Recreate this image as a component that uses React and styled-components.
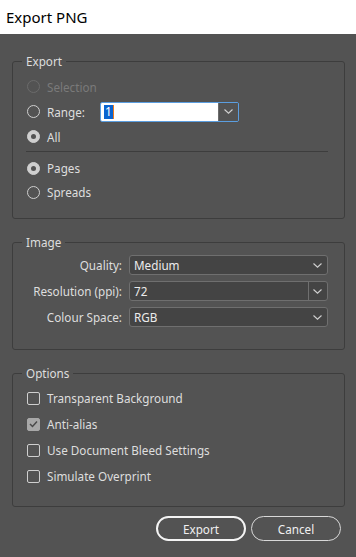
import styled, { createGlobalStyle } from 'styled-components';

const GlobalStyle = createGlobalStyle`
  html, body {
    margin: 0;
    padding: 0;
    background: #535353;
  }
  body {
    font-family: "Noto Sans", "Open Sans", sans-serif;
  }
`;

const Window = styled.div`
  width: 356px;
  height: 557px;
  display: flex;
  flex-direction: column;
  background: #535353;
  overflow: hidden;
`;

const TitleBar = styled.div`
  height: 34px;
  background: #ffffff;
  color: #000;
  font-size: 15px;
  display: flex;
  align-items: center;
  padding-left: 6px;
  padding-bottom: 1px;
  box-sizing: border-box;
`;

const Body = styled.div`
  display: flex;
  flex-direction: column;
  padding: 19px 11px 0 12px;
  gap: 15px;
`;

const Panel = styled.fieldset`
  margin: 0;
  border: 1px solid #3d3d3d;
  border-radius: 3px;
  padding: ${(p) => p.$pad || '5px 16px 14px 14px'};
  min-width: 0;
  display: flex;
  flex-direction: column;
`;

const Legend = styled.legend`
  color: #dedede;
  font-size: 11.7px;
  line-height: 16px;
  padding: 0 4px;
  margin-left: -5px;
`;

const Row = styled.label`
  display: flex;
  align-items: center;
  height: ${(p) => p.$h || 25}px;
  gap: 7px;
  font-size: 11.7px;
  color: ${(p) => (p.$disabled ? '#7a7a7a' : '#dedede')};
`;

const Radio = styled.span`
  width: 11px;
  height: 11px;
  border-radius: 50%;
  border: 1px solid ${(p) => (p.$disabled ? '#6b6b6b' : '#cfcfcf')};
  display: flex;
  align-items: center;
  justify-content: center;
  flex: none;
  background: ${(p) => (p.$checked ? '#cfcfcf' : 'transparent')};

  &::after {
    content: '';
    width: 5px;
    height: 5px;
    border-radius: 50%;
    background: ${(p) => (p.$checked ? '#535353' : 'transparent')};
  }
`;

const RowLabel = styled.span`
  width: ${(p) => p.$w || 'auto'};
`;

const Separator = styled.div`
  height: 1px;
  background: #3d3d3d;
  margin: 2px 0 4px -1px;
`;

const Combo = styled.div`
  display: flex;
  width: 139px;
  height: 20px;
  box-sizing: border-box;
  border: 1px solid #5b9ee0;
  border-radius: 2px;
  margin-left: 8px;
  overflow: hidden;
`;

const ComboField = styled.div`
  flex: 1;
  background: #ffffff;
  display: flex;
  align-items: center;
  padding-left: 3px;
`;

const Selected = styled.span`
  background: #0a64d0;
  color: #fff;
  font-size: 12px;
  line-height: 14px;
  padding: 0 1px;
  border-right: 1px solid #f07a1a;
`;

const ComboButton = styled.div`
  width: 19px;
  display: flex;
  align-items: center;
  justify-content: center;
  background: #535353;
  border-left: 1px solid #6c6c6c;
`;

const FormGrid = styled.div`
  display: grid;
  grid-template-columns: 94px 199px;
  column-gap: 7px;
  row-gap: 6px;
  align-items: center;
  margin-left: 1px;
`;

const FieldLabel = styled.span`
  text-align: right;
  font-size: 11.7px;
  color: #dedede;
  white-space: nowrap;
`;

const Select = styled.div`
  height: 20px;
  box-sizing: border-box;
  border: 1px solid #6f6f6f;
  border-radius: 3px;
  background: #444444;
  display: flex;
  align-items: center;
  font-size: 11.7px;
  color: #ececec;
`;

const SelectValue = styled.span`
  flex: 1;
  padding-left: 4px;
`;

const SelectArrow = styled.span`
  width: 17px;
  height: 100%;
  display: flex;
  align-items: center;
  justify-content: center;
  border-left: ${(p) => (p.$split ? '1px solid #6f6f6f' : 'none')};
  margin-right: 1px;
`;

const Check = styled.span`
  width: 11px;
  height: 11px;
  border-radius: 2px;
  border: 1px solid ${(p) => (p.$checked ? '#a8a8a8' : '#cfcfcf')};
  background: ${(p) => (p.$checked ? '#a8a8a8' : 'transparent')};
  display: flex;
  align-items: center;
  justify-content: center;
  flex: none;
`;

const Buttons = styled.div`
  display: flex;
  justify-content: flex-end;
  gap: 5px;
  padding: 9px 15px 0 0;
`;

const Button = styled.button`
  width: 90px;
  height: 25px;
  border-radius: 13px;
  border: ${(p) => (p.$primary ? '2px solid #f4f4f4' : '1px solid #d8d8d8')};
  background: transparent;
  color: #f0f0f0;
  font-family: inherit;
  font-size: 11.7px;
  padding: 0;
`;

const Chevron = ({ color = '#d0d0d0' }) => (
  <svg width="9" height="5" viewBox="0 0 9 5">
    <path d="M0.5 0.5 L4.5 4.2 L8.5 0.5" fill="none" stroke={color} strokeWidth="1.1" />
  </svg>
);

const Tick = () => (
  <svg width="9" height="8" viewBox="0 0 9 8">
    <path d="M1 4 L3.5 6.5 L8 1.5" fill="none" stroke="#4a4a4a" strokeWidth="1.5" />
  </svg>
);

export default function App() {
  return (
    <Window>
      <GlobalStyle />
      <TitleBar>Export PNG</TitleBar>
      <Body>
        <Panel>
          <Legend>Export</Legend>
          <Row $disabled>
            <Radio $disabled />
            Selection
          </Row>
          <Row>
            <Radio />
            <RowLabel>Range:</RowLabel>
            <Combo>
              <ComboField>
                <Selected>1</Selected>
              </ComboField>
              <ComboButton>
                <Chevron />
              </ComboButton>
            </Combo>
          </Row>
          <Row>
            <Radio $checked />
            All
          </Row>
          <Separator />
          <Row $h={24}>
            <Radio $checked />
            Pages
          </Row>
          <Row $h={24}>
            <Radio />
            Spreads
          </Row>
        </Panel>

        <Panel $pad="5px 16px 22px 14px">
          <Legend>Image</Legend>
          <FormGrid>
            <FieldLabel>Quality:</FieldLabel>
            <Select>
              <SelectValue>Medium</SelectValue>
              <SelectArrow>
                <Chevron />
              </SelectArrow>
            </Select>
            <FieldLabel>Resolution (ppi):</FieldLabel>
            <Select>
              <SelectValue>72</SelectValue>
              <SelectArrow $split>
                <Chevron />
              </SelectArrow>
            </Select>
            <FieldLabel>Colour Space:</FieldLabel>
            <Select>
              <SelectValue>RGB</SelectValue>
              <SelectArrow>
                <Chevron />
              </SelectArrow>
            </Select>
          </FormGrid>
        </Panel>

        <Panel $pad="4px 16px 17px 14px">
          <Legend>Options</Legend>
          <Row $h={26}>
            <Check />
            Transparent Background
          </Row>
          <Row $h={26}>
            <Check $checked>
              <Tick />
            </Check>
            Anti-alias
          </Row>
          <Row $h={26}>
            <Check />
            Use Document Bleed Settings
          </Row>
          <Row $h={26}>
            <Check />
            Simulate Overprint
          </Row>
        </Panel>
      </Body>
      <Buttons>
        <Button $primary>Export</Button>
        <Button>Cancel</Button>
      </Buttons>
    </Window>
  );
}
